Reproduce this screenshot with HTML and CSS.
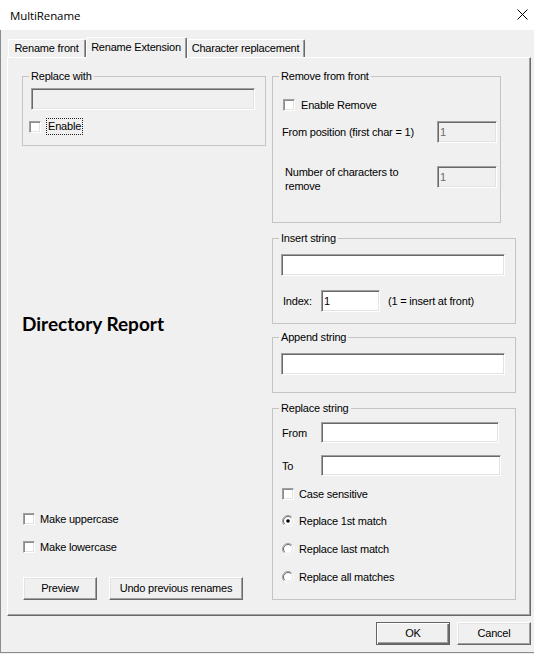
FILE: index.html
```html
<!DOCTYPE html>
<html>
<head>
<meta charset="utf-8">
<title>MultiRename</title>
<link rel="stylesheet" href="styles.css">
</head>
<body>
<div class="window">
  <div class="titlebar">
    <span class="title">MultiRename</span>
    <svg class="close" width="11" height="11" viewBox="0 0 11 11"><path d="M0.5 0.5L10.5 10.5M10.5 0.5L0.5 10.5" stroke="#000" stroke-width="1" fill="none"/></svg>
  </div>
  <div class="client">
    <div class="tabs">
      <div class="tab t1">Rename front</div>
      <div class="tab t2 active">Rename Extension</div>
      <div class="tab t3">Character replacement</div>
    </div>
    <div class="panel">
      <div class="col left">
        <fieldset class="group g-with">
          <legend>Replace with</legend>
          <div class="gbody">
            <div class="input disabled w224 ml2"></div>
            <div class="checkrow mt8"><span class="cb"></span><span class="focus">Enable</span></div>
          </div>
        </fieldset>
        <div class="report">Directory Report</div>
        <div class="bottom">
          <div class="checkrow pl1"><span class="cb"></span><span>Make uppercase</span></div>
          <div class="checkrow pl1 mt11"><span class="cb"></span><span>Make lowercase</span></div>
          <div class="btnrow">
            <button class="btn w74">Preview</button>
            <button class="btn w134">Undo previous renames</button>
          </div>
        </div>
      </div>
      <div class="col right">
        <fieldset class="group g-remove">
          <legend>Remove from front</legend>
          <div class="gbody">
            <div class="checkrow gap6"><span class="cb"></span><span>Enable Remove</span></div>
            <div class="row mt8 shift-l">
              <span>From position (first char = 1)</span>
              <div class="input disabled w60 push">1</div>
            </div>
            <div class="row top mt23">
              <span class="multi">Number of characters to<br>remove</span>
              <div class="input disabled w60 push">1</div>
            </div>
          </div>
        </fieldset>
        <fieldset class="group g-insert">
          <legend>Insert string</legend>
          <div class="gbody">
            <div class="input w224"></div>
            <div class="row mt14">
              <span class="lbl-index">Index:</span>
              <div class="input w59">1</div>
              <span class="hint">(1 = insert at front)</span>
            </div>
          </div>
        </fieldset>
        <fieldset class="group g-append">
          <legend>Append string</legend>
          <div class="gbody">
            <div class="input w224"></div>
          </div>
        </fieldset>
        <fieldset class="group g-replace">
          <legend>Replace string</legend>
          <div class="gbody">
            <div class="row">
              <span class="lbl-from">From</span>
              <div class="input h21 w178"></div>
            </div>
            <div class="row mt12">
              <span class="lbl-from">To</span>
              <div class="input h21 w180"></div>
            </div>
            <div class="checkrow mt9"><span class="cb"></span><span>Case sensitive</span></div>
            <div class="checkrow mt10">
              <svg class="rb" width="12" height="12" viewBox="0 0 12 12"><circle cx="6" cy="6" r="5" fill="#fff"/><path d="M9.9 2.1A5.5 5.5 0 0 0 2.1 9.9" fill="none" stroke="#a0a0a0"/><path d="M9.2 2.8A4.5 4.5 0 0 0 2.8 9.2" fill="none" stroke="#696969"/><path d="M2.1 9.9A5.5 5.5 0 0 0 9.9 2.1" fill="none" stroke="#fff"/><path d="M2.8 9.2A4.5 4.5 0 0 0 9.2 2.8" fill="none" stroke="#e3e3e3"/><circle cx="6" cy="6" r="1.8" fill="#000"/></svg>
              <span>Replace 1st match</span>
            </div>
            <div class="checkrow mt11">
              <svg class="rb" width="12" height="12" viewBox="0 0 12 12"><circle cx="6" cy="6" r="5" fill="#fff"/><path d="M9.9 2.1A5.5 5.5 0 0 0 2.1 9.9" fill="none" stroke="#a0a0a0"/><path d="M9.2 2.8A4.5 4.5 0 0 0 2.8 9.2" fill="none" stroke="#696969"/><path d="M2.1 9.9A5.5 5.5 0 0 0 9.9 2.1" fill="none" stroke="#fff"/><path d="M2.8 9.2A4.5 4.5 0 0 0 9.2 2.8" fill="none" stroke="#e3e3e3"/></svg>
              <span>Replace last match</span>
            </div>
            <div class="checkrow mt11">
              <svg class="rb" width="12" height="12" viewBox="0 0 12 12"><circle cx="6" cy="6" r="5" fill="#fff"/><path d="M9.9 2.1A5.5 5.5 0 0 0 2.1 9.9" fill="none" stroke="#a0a0a0"/><path d="M9.2 2.8A4.5 4.5 0 0 0 2.8 9.2" fill="none" stroke="#696969"/><path d="M2.1 9.9A5.5 5.5 0 0 0 9.9 2.1" fill="none" stroke="#fff"/><path d="M2.8 9.2A4.5 4.5 0 0 0 9.2 2.8" fill="none" stroke="#e3e3e3"/></svg>
              <span>Replace all matches</span>
            </div>
          </div>
        </fieldset>
      </div>
    </div>
    <div class="footer">
      <button class="btn w74 default">OK</button>
      <button class="btn w74">Cancel</button>
    </div>
  </div>
</div>
</body>
</html>
```
FILE: styles.css
```css
* { box-sizing: border-box; }
html, body { margin: 0; padding: 0; }
body {
  width: 534px;
  height: 654px;
  overflow: hidden;
  background: #f0f0f0;
  font-family: "Liberation Sans", Arial, sans-serif;
  font-size: 11px;
  letter-spacing: -0.2px;
  color: #000;
}
.window {
  width: 534px;
  height: 653px;
  display: flex;
  flex-direction: column;
}
.titlebar {
  height: 30px;
  flex: none;
  background: #fff;
  display: flex;
  align-items: center;
  justify-content: space-between;
  padding: 0 6px 0 10px;
}
.title {
  font-family: "Open Sans", sans-serif;
  font-size: 11.5px;
  letter-spacing: -0.1px;
}
.close { display: block; margin-top: -1px; }
.client {
  flex: 1;
  display: flex;
  flex-direction: column;
  background: #f0f0f0;
  border-left: 1px solid #8c8c8c;
  border-bottom: 1px solid #8c8c8c;
  padding-left: 6px;
}
.tabs {
  height: 28px;
  margin-bottom: -1px;
  display: flex;
  align-items: flex-end;
  padding-left: 1px;
  position: relative;
  z-index: 1;
}
.tab {
  height: 18px;
  margin-bottom: 1px;
  display: flex;
  justify-content: center;
  align-items: flex-start;
  padding: 2px 1px 0 0;
  line-height: 13px;
  background: #f0f0f0;
  border-top: 1px solid #fff;
  border-left: 1px solid #fff;
  border-right: 1px solid #696969;
  box-shadow: inset -1px 0 #a0a0a0;
  border-radius: 2px 2px 0 0;
  white-space: nowrap;
}
.t1 { width: 78px; }
.t2 { width: 101px; }
.t3 { width: 118px; }
.tab.active {
  height: 21px;
  margin-bottom: 0;
  padding-top: 3px;
}
.panel {
  width: 524px;
  height: 559px;
  flex: none;
  border-top: 1px solid #fff;
  border-left: 1px solid #fff;
  border-right: 1px solid #696969;
  border-bottom: 1px solid #696969;
  box-shadow: inset -1px -1px #a0a0a0;
  display: grid;
  grid-template-columns: 244px 244px;
  column-gap: 6px;
  padding: 12px 0 15px 14px;
}
.col {
  display: flex;
  flex-direction: column;
  min-height: 0;
}
.group {
  margin: 0;
  padding: 0;
  min-width: 0;
  border: 1px solid #c4c4c4;
}
.group legend {
  margin-left: 6px;
  padding: 0 2px;
  height: 12px;
  line-height: 12px;
}
.g-with { height: 76px; }
.g-with .gbody { padding: 6px 0 0 6px; }
.g-remove { width: 229px; height: 153px; }
.g-remove .gbody { padding: 14px 3px 0 10px; }
.g-insert { height: 92px; margin-top: 9px; }
.g-insert .gbody { padding: 10px 0 0 8px; }
.g-append { height: 62px; margin-top: 7px; }
.g-append .gbody { padding: 10px 0 0 8px; }
.g-replace { height: 198px; margin-top: 9px; }
.g-replace .gbody { padding: 8px 0 0 9px; }

.input {
  height: 22px;
  background: #fff;
  border: 1px solid;
  border-color: #a0a0a0 #fff #fff #a0a0a0;
  box-shadow: inset 1px 1px #696969, inset -1px -1px #e3e3e3;
  display: flex;
  align-items: center;
  padding: 0 0 1px 2px;
  flex: none;
}
.input.disabled { background: #f0f0f0; color: #6d6d6d; }
.h21 { height: 21px; }
.w224 { width: 224px; }
.w60 { width: 60px; }
.w59 { width: 59px; }
.w178 { width: 178px; }
.w180 { width: 180px; }
.ml2 { margin-left: 2px; }
.mt8 { margin-top: 8px; }
.mt9 { margin-top: 9px; }
.mt10 { margin-top: 10px; }
.mt11 { margin-top: 11px; }
.mt12 { margin-top: 12px; }
.mt14 { margin-top: 14px; }
.mt23 { margin-top: 23px; }
.pl1 { padding-left: 1px; }

.checkrow {
  height: 17px;
  display: flex;
  align-items: center;
  gap: 5px;
  white-space: nowrap;
}
.checkrow.gap6 { gap: 6px; }
.cb {
  width: 12px;
  height: 12px;
  flex: none;
  background: #fff;
  border: 1px solid;
  border-color: #a0a0a0 #fff #fff #a0a0a0;
  box-shadow: inset 1px 1px #8c8c8c, inset -1px -1px #e3e3e3;
}
.rb { display: block; flex: none; }
.focus {
  height: 17px;
  line-height: 15px;
  padding: 0 1px;
  border: 1px dotted #222;
}
.row {
  display: flex;
  align-items: center;
  white-space: nowrap;
}
.row.top { align-items: flex-start; }
.shift-l { margin-left: -1px; }
.push { margin-left: auto; }
.multi {
  line-height: 14px;
  margin: -1px 0 0 2px;
}
.lbl-index { width: 40px; padding-left: 2px; }
.hint { margin-left: 8px; }
.lbl-from { width: 39px; }

.report {
  margin-top: 166px;
  font-family: Lato, "Open Sans", sans-serif;
  font-weight: 700;
  font-size: 19px;
  line-height: 23px;
  letter-spacing: 0;
}
.bottom { margin-top: auto; }
.btnrow {
  display: flex;
  gap: 12px;
  margin-top: 22px;
  padding-left: 1px;
}
.btn {
  font: inherit;
  letter-spacing: inherit;
  color: #000;
  height: 23px;
  padding: 0 0 1px 0;
  margin: 0;
  background: #f0f0f0;
  border: 1px solid;
  border-color: #fff #696969 #696969 #fff;
  box-shadow: inset -1px -1px #a0a0a0, inset 1px 1px #e3e3e3;
  white-space: nowrap;
}
.w74 { width: 74px; }
.w134 { width: 134px; }
.btn.default {
  border-color: #646464;
  box-shadow: inset 1px 1px #fff, inset -1px -1px #696969, inset -2px -2px #a0a0a0;
}
.footer {
  display: flex;
  justify-content: flex-end;
  gap: 7px;
  padding: 6px 3px 0 0;
}
```
